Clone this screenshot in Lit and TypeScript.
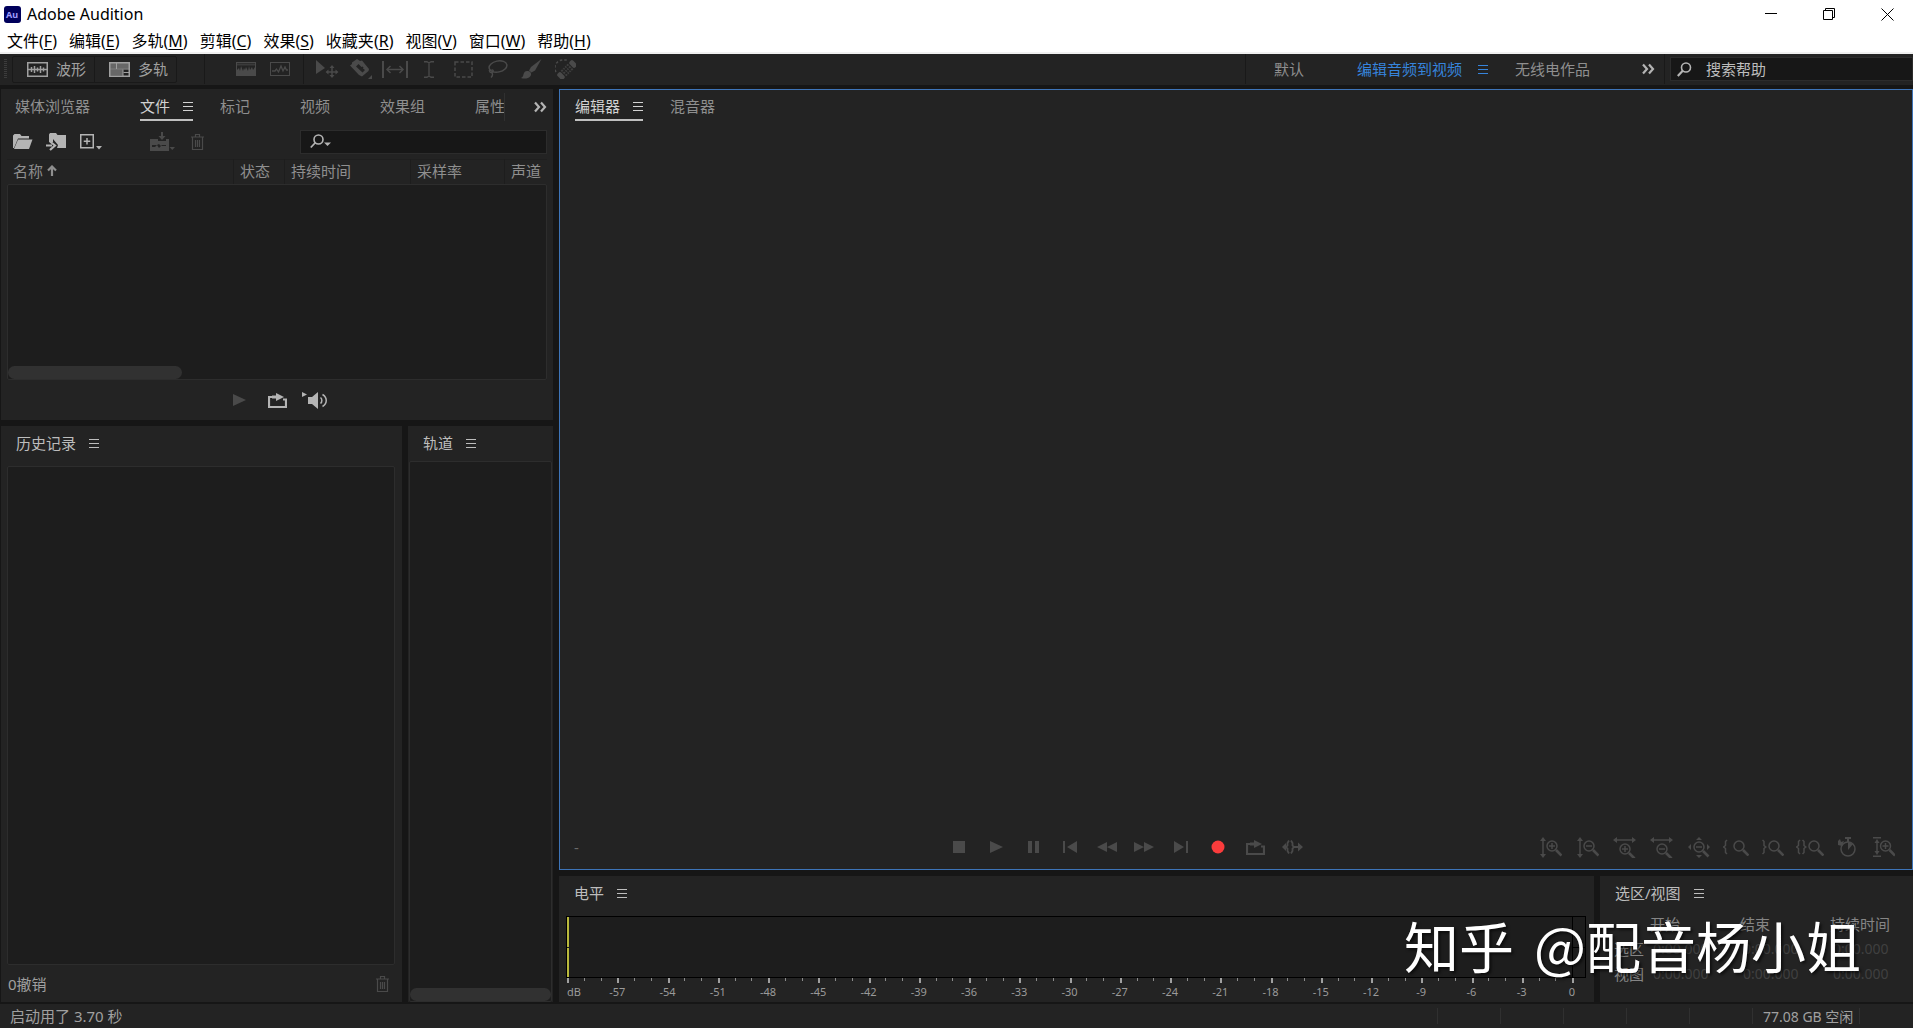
import { LitElement, html, css, svg, nothing } from "lit";
import type { SVGTemplateResult, TemplateResult } from "lit";
import { customElement } from "lit/decorators.js";

interface Icon {
  w: number;
  h: number;
  body: SVGTemplateResult;
}

const lens = (cx: number, cy: number, sign: SVGTemplateResult | typeof nothing = nothing) => svg`
  <circle cx=${cx} cy=${cy} r="5" fill="none" stroke="currentColor" stroke-width="1.5"/>
  <path d=${`M${cx + 4} ${cy + 4}l5.5 5.5`} stroke="currentColor" stroke-width="2.6"/>
  ${sign}`;
const plus = (cx: number, cy: number) =>
  svg`<path d=${`M${cx - 3} ${cy}h6M${cx} ${cy - 3}v6`} stroke="currentColor" stroke-width="1.5"/>`;
const minus = (cx: number, cy: number) =>
  svg`<path d=${`M${cx - 3} ${cy}h6`} stroke="currentColor" stroke-width="1.5"/>`;
const vArrow = svg`<path d="M3 3v15" stroke="currentColor" stroke-width="1.5"/><path d="M3 0l3 4H0zM3 21l3-4H0z" fill="currentColor"/>`;
const hArrow = svg`<path d="M3 3h17" stroke="currentColor" stroke-width="1.5"/><path d="M0 3l4-3v6zM23 3l-4-3v6z" fill="currentColor"/>`;

const icons: Record<string, Icon> = {
  menu: { w: 10, h: 11, body: svg`<path d="M0 1.500h10M0 5.500h10M0 9.500h10" stroke="currentColor" stroke-width="1.200"/>` },
  more: { w: 14, h: 12, body: svg`<path d="M2 1.500l4 4.500-4 4.500M8 1.500l4 4.500-4 4.500" fill="none" stroke="currentColor" stroke-width="2.200"/>` },
  minimize: { w: 12, h: 12, body: svg`<path d="M0 5.500h12" stroke="currentColor"/>` },
  restore: { w: 12, h: 12, body: svg`<path d="M.500 2.500h9v9h-9zM2.500 2.500v-2h9v9h-2" fill="none" stroke="currentColor"/>` },
  close: { w: 13, h: 13, body: svg`<path d="M.500.500l12 12M12.500.500l-12 12" stroke="currentColor"/>` },
  wave: { w: 21, h: 15, body: svg`<rect x=".75" y=".75" width="19.500" height="13.500" fill="none" stroke="currentColor" stroke-width="1.500"/><path d="M1 7.500h19M4.500 5v5M7.500 4v7M10.500 5.500v4M13.500 4v7M16.500 5.500v4" stroke="currentColor" stroke-width="1.500"/>` },
  multi: { w: 21, h: 15, body: svg`<rect x=".75" y=".75" width="19.500" height="13.500" fill="none" stroke="currentColor" stroke-width="1.500"/><path d="M1 1h19v5.500H1z" fill="currentColor" opacity=".55"/><path d="M1 7.500h13v6H1z" fill="currentColor" opacity=".55"/><path d="M1 7h19M7.500 1v6M14 7.500V14M14.500 10.500H20" stroke="currentColor"/>` },
  spectrum: { w: 20, h: 14, body: svg`<rect x=".5" y=".5" width="19" height="13" fill="none" stroke="currentColor"/><path d="M1 13V8l2-2 1 3 1-5 2 5 1-3 1 2 1-3 2 4 1-5 1 4 2-3 1 3 2-3v8z" fill="currentColor"/><path d="M1 2.500h18" stroke="currentColor" stroke-width="2" opacity=".6"/>` },
  pitch: { w: 20, h: 14, body: svg`<rect x=".5" y=".5" width="19" height="13" fill="none" stroke="currentColor"/><path d="M2 9h3l1.500-2 2 3 2.500-6 2 5 2-4 1.500 3H18" fill="none" stroke="currentColor" stroke-width="1.300"/>` },
  move: { w: 24, h: 18, body: svg`<path d="M1 0l9 8-9 6z" fill="currentColor"/><path d="M17 7v10M12 12h10" stroke="currentColor" stroke-width="1.500"/><path d="M17 5l2.500 3h-5zM17 18l2.500-3h-5zM10.500 12l3-2.500v5zM23.500 12l-3-2.500v5z" fill="currentColor"/>` },
  razor: { w: 22, h: 20, body: svg`<path fill-rule="evenodd" d="M7 0l3 2 2-.500L19 10l-.500 2L12 17.500 9 16 0 6.500l2-1.500 0-1.500zM8.500 5L6 7.500l6.500 6 2.500-2.500-2-1.500.500-1-1-1-1 .500z" fill="currentColor"/><path d="M22 16v4h-4z" fill="currentColor"/>` },
  slip: { w: 26, h: 17, body: svg`<path d="M1 0v17M25 0v17" stroke="currentColor" stroke-width="2"/><path d="M5 8.500h16" stroke="currentColor" stroke-width="1.500"/><path d="M8.500 5L5 8.500 8.500 12M17.500 5L21 8.500 17.500 12" fill="none" stroke="currentColor" stroke-width="1.500"/>` },
  ibeam: { w: 10, h: 17, body: svg`<path d="M0 .75h3L5 2l2-1.250h3M0 16.250h3L5 15l2 1.250h3M5 2v13" fill="none" stroke="currentColor" stroke-width="1.300"/>` },
  marquee: { w: 19, h: 17, body: svg`<rect x="1" y="1" width="17" height="15" fill="none" stroke="currentColor" stroke-width="1.500" stroke-dasharray="3.500 2"/>` },
  lasso: { w: 21, h: 18, body: svg`<ellipse cx="11" cy="6.500" rx="9" ry="5.500" transform="rotate(-12 11 6.500)" fill="none" stroke="currentColor" stroke-width="1.500"/><path d="M3 9c-1.500 2 0 4 2 3.500s1.500-3-.500-2.500M4.500 12.500c1.500 1 1.500 3-.500 5" fill="none" stroke="currentColor" stroke-width="1.400"/>` },
  brush: { w: 21, h: 20, body: svg`<path d="M20.500 0L14 11.500l-3.500 2-2.500-2L10 8z" fill="currentColor"/><path d="M7 12c3 .5 4 3 2.500 5C7.500 20 3 20 0 19c2.500-1 2-3 3-5s2.500-2 4-2z" fill="currentColor"/>` },
  heal: { w: 21, h: 20, body: svg`<g transform="rotate(-45 12 11)"><rect x="1" y="7" width="5" height="8" rx="2" fill="currentColor"/><rect x="18" y="7" width="5" height="8" rx="2" fill="currentColor"/><path d="M7 7h10v8H7z" fill="currentColor" opacity=".75"/><path d="M9.500 7v8M12 7v8M14.500 7v8M7 9.500h10M7 12.500h10" stroke="#232323"/></g><path d="M1 13A8 8 0 0 1 9 1h4" fill="none" stroke="currentColor" stroke-width="1.500" stroke-dasharray="2.500 2"/>` },
  search: { w: 15, h: 15, body: svg`<circle cx="9" cy="5.500" r="4.500" fill="none" stroke="currentColor" stroke-width="1.600"/><path d="M6 8.500L.800 14" stroke="currentColor" stroke-width="2.200"/>` },
  searchDrop: { w: 21, h: 15, body: svg`<circle cx="8.500" cy="5.500" r="4.500" fill="none" stroke="currentColor" stroke-width="1.600"/><path d="M5.500 8.500L.800 13.500" stroke="currentColor" stroke-width="1.800"/><path d="M14 8.500h7L17.500 12z" fill="currentColor"/>` },
  folder: { w: 20, h: 15, body: svg`<path d="M0 14V1.500L1.500 0H7l1.500 2H16v2.500H5L1 14z" fill="currentColor"/><path d="M5 5.500h14.500L16 15H1z" fill="currentColor"/>` },
  folderIn: { w: 21, h: 18, body: svg`<path d="M3 8V1.500L4 0h6l1.500 2H20v13H11l1-3-5-6v3H3z" fill="currentColor"/><path d="M0 12.500h6M4 8.500l5 4-5 4.500" fill="none" stroke="currentColor" stroke-width="2.200"/>` },
  newFile: { w: 22, h: 16, body: svg`<rect x=".75" y=".75" width="12.500" height="13" fill="none" stroke="currentColor" stroke-width="1.500"/><path d="M7 4v6.500M3.750 7.250h6.500" stroke="currentColor" stroke-width="1.500"/><path d="M16 12h6l-3 3.500z" fill="currentColor"/>` },
  insert: { w: 25, h: 19, body: svg`<path fill-rule="evenodd" d="M0 7h8v2h8V7h3v12H0zM2 13v2h3l2-2 2 3 2-2h5v-1h-4l-1 1-2-2-2 1z" fill="currentColor"/><path d="M12 0v5" stroke="currentColor" stroke-width="2"/><path d="M8.500 4h7L12 8z" fill="currentColor"/><path d="M19.500 15H25l-2.750 3z" fill="currentColor"/>` },
  trash: { w: 13, h: 16, body: svg`<path d="M0 3h13M4.500 2.500v-2h4v2M1.500 3.500v12h10v-12M4.500 6v7M6.500 6v7M8.500 6v7" fill="none" stroke="currentColor" stroke-width="1.200"/>` },
  up: { w: 10, h: 11, body: svg`<path d="M5 11V2M1 5.500l4-4 4 4" fill="none" stroke="currentColor" stroke-width="2.200"/>` },
  play: { w: 13, h: 12, body: svg`<path d="M0 0l13 6-13 6z" fill="currentColor"/>` },
  loop: { w: 19, h: 15, body: svg`<path d="M6 4H1v10h17V6.500h-3" fill="none" stroke="currentColor" stroke-width="2.200"/><path d="M4 4h5" stroke="currentColor" stroke-width="3"/><path d="M8 0l8 4-8 4z" fill="currentColor"/>` },
  speaker: { w: 26, h: 17, body: svg`<path d="M0 0l5 2.500L0 5z" fill="currentColor"/><path d="M6 5h4l6-5v17l-6-5H6z" fill="currentColor"/><path d="M18.500 5.500c1.800 1.500 1.800 4.500 0 6M20.500 2.500c5 3 5 9 0 12" fill="none" stroke="currentColor" stroke-width="1.500"/>` },
  stop: { w: 12, h: 12, body: svg`<path d="M0 0h12v12H0z" fill="currentColor"/>` },
  pause: { w: 11, h: 12, body: svg`<path d="M0 0h4v12H0zM7 0h4v12H7z" fill="currentColor"/>` },
  prev: { w: 14, h: 12, body: svg`<path d="M0 0h2v12H0zM14 0v12L4 6z" fill="currentColor"/>` },
  next: { w: 14, h: 12, body: svg`<path d="M12 0h2v12h-2zM0 0v12l10-6z" fill="currentColor"/>` },
  rewind: { w: 20, h: 10, body: svg`<path d="M10 0v10L0 5zM20 0v10L10 5z" fill="currentColor"/>` },
  forward: { w: 20, h: 10, body: svg`<path d="M0 0v10l10-5zM10 0v10l10-5z" fill="currentColor"/>` },
  record: { w: 14, h: 14, body: svg`<circle cx="7" cy="7" r="6.500" fill="currentColor"/>` },
  skip: { w: 21, h: 14, body: svg`<path d="M0 7l4-4v8zM21 7l-5-4.500v9z" fill="currentColor"/><path d="M7 .500L5.500 3v2.500L4 7l1.500 1.500V11L7 13.500M9 .500L10.500 3v2.500L12 7l-1.500 1.500V11L9 13.500M3 7h1M12 7h5" fill="none" stroke="currentColor" stroke-width="1.800"/>` },
  zoomInV: { w: 22, h: 21, body: svg`${vArrow}${lens(12, 9, plus(12, 9))}` },
  zoomOutV: { w: 22, h: 21, body: svg`${vArrow}${lens(12, 9, minus(12, 9))}` },
  zoomInH: { w: 23, h: 21, body: svg`${hArrow}${lens(12, 12, plus(12, 12))}` },
  zoomOutH: { w: 23, h: 21, body: svg`${hArrow}${lens(12, 12, minus(12, 12))}` },
  zoomAll: { w: 22, h: 21, body: svg`${lens(11, 10, minus(11, 10))}<path d="M11 0l3 3H8zM11 21l3-3H8zM0 10l3-3v6zM22 10l-3-3v6z" fill="currentColor"/>` },
  zoomIn: { w: 26, h: 17, body: svg`<path d="M4 1L2.500 2.500v4L.700 8l1.800 1.500v4L4 15" fill="none" stroke="currentColor" stroke-width="1.500"/>${lens(16, 7)}` },
  zoomOut: { w: 22, h: 17, body: svg`<path d="M.500 1L2 2.500v4L3.800 8 2 9.500v4L.500 15" fill="none" stroke="currentColor" stroke-width="1.500"/>${lens(12, 7)}` },
  zoomSel: { w: 28, h: 17, body: svg`<path d="M4 1L2.500 2.500v4L.700 8l1.800 1.500v4L4 15M6.500 1L8 2.500v4L9.800 8 8 9.500v4L6.500 15" fill="none" stroke="currentColor" stroke-width="1.500"/>${lens(18, 7)}` },
  timer: { w: 18, h: 20, body: svg`<circle cx="10" cy="12" r="7" fill="none" stroke="currentColor" stroke-width="1.500"/><path d="M10 1v4M7 1h6" stroke="currentColor" stroke-width="2"/><path d="M10 5l5 2-5 6z" fill="currentColor"/><path d="M0 8V4l2-2 1 3 3-1-2 5z" fill="currentColor"/>` },
  zoomFit: { w: 22, h: 20, body: svg`<path d="M0 .75h8M0 19.250h8" stroke="currentColor" stroke-width="1.500"/><path d="M4 5v10" stroke="currentColor" stroke-width="1.500"/><path d="M4 2l2.500 4h-5zM4 18l2.500-4h-5z" fill="currentColor"/>${lens(12.5, 9, plus(12.5, 9))}` },
};

const icon = (name: string): TemplateResult => {
  const { w, h, body } = icons[name];
  return html`<svg width=${w} height=${h} viewBox="0 0 ${w} ${h}" aria-hidden="true">${body}</svg>`;
};

const iconButton = (name: string, label: string, tone = "") =>
  html`<button class="icon ${tone}" aria-label=${label}>${icon(name)}</button>`;

const base = css`
  * { box-sizing: border-box; }
  button {
    font: inherit;
    color: inherit;
    background: none;
    border: 0;
    padding: 0;
    margin: 0;
    white-space: nowrap;
  }
  svg { display: block; flex: none; }
  .icon { display: flex; align-items: center; justify-content: center; flex: none; color: #4a4a4a; }
  .icon.bright { color: #b4b4b4; }
  .icon.record { color: #fa3c3c; }
`;

@customElement("tab-strip")
export class TabStrip extends LitElement {
  static properties = { tabs: { attribute: false }, active: {}, variant: {} };
  declare tabs: string[];
  declare active: string;
  declare variant: string;

  static styles = [
    base,
    css`
      :host { display: block; min-width: 0; overflow: hidden; }
      .strip { display: flex; gap: 27px; align-items: flex-start; }
      .tab { display: flex; align-items: center; gap: 13px; height: 28px; border-bottom: 2px solid transparent; color: #8f8f8f; }
      .tab .mark { visibility: hidden; }
      .tab.active { color: #d2d2d2; border-color: #c0c0c0; }
      .tab.active .mark { visibility: visible; }
      .tab.title { border-color: transparent; color: #bdbdbd; }
      .workspace .tab { gap: 16px; height: 30px; border: 0; }
      .workspace .tab.active { color: #3684dc; }
    `,
  ];

  render() {
    return html`<div class="strip ${this.variant ?? ""}" role="tablist">
      ${this.tabs.map(
        (t) => html`<button role="tab" aria-selected=${t === this.active}
          class="tab ${t === this.active ? "active" : ""} ${this.variant === "single" ? "title" : ""}">
          <span>${t}</span><span class="mark">${icon("menu")}</span>
        </button>`,
      )}
    </div>`;
  }
}

@customElement("level-meter")
export class LevelMeter extends LitElement {
  static styles = [
    base,
    css`
      :host { display: block; }
      .meter { height: 62px; border: 1px solid #000; background: #1d1d1d; display: flex; justify-content: space-between; }
      .bars { display: grid; gap: 1px; width: 2px; }
      .bar { background: #b9b93c; }
      .clip { width: 13px; border-left: 1px solid #000; display: grid; grid-template-rows: 1fr 1fr; }
      .clip span + span { border-top: 1px solid #000; }
      .ticks, .labels { display: flex; justify-content: space-between; margin: 0 14px 0 1px; }
      .tick { width: 0; }
      .tick::before { content: ""; display: block; width: 1px; height: 3px; background: #8c8c8c; }
      .tick.major::before { width: 2px; height: 5px; background: #a0a0a0; }
      .ticks { height: 5px; }
      .labels { font-size: 11px; line-height: 18px; color: #9a9a9a; }
      .label { width: 0; display: flex; justify-content: center; white-space: nowrap; }
      .label:first-child { justify-content: flex-start; }
    `,
  ];

  render() {
    const ticks = Array.from({ length: 61 }, (_, i) => i);
    const labels = Array.from({ length: 21 }, (_, i) => (i === 0 ? "dB" : String(i * 3 - 60)));
    return html`
      <div class="meter">
        <div class="bars"><span class="bar"></span><span class="bar"></span></div>
        <div class="clip"><span></span><span></span></div>
      </div>
      <div class="ticks">${ticks.map((i) => html`<span class="tick ${i % 3 ? "" : "major"}"></span>`)}</div>
      <div class="labels">${labels.map((l) => html`<span class="label"><span>${l}</span></span>`)}</div>
    `;
  }
}

@customElement("app-root")
export class AppRoot extends LitElement {
  static styles = [
    base,
    css`
      :host {
        display: flex;
        flex-direction: column;
        position: relative;
        min-height: 100vh;
        overflow: hidden;
        background: #161616;
        color: #a0a0a0;
        font: 15px/20px "Noto Sans", "Noto Sans CJK SC", sans-serif;
      }

      .titlebar { display: flex; align-items: center; height: 30px; padding: 0 19px 2px 4px; background: #fff; color: #000; font-size: 16px; }
      .logo { margin-right: 6px; }
      .logo text { font: bold 9px "Noto Sans", sans-serif; fill: #9e9cff; }
      .title { flex: 1; }
      .window { display: flex; gap: 46px; }
      .menubar { display: flex; align-items: center; gap: 12px; height: 24px; padding: 0 7px; background: #fff; color: #000; font-size: 16px; border-bottom: 2px solid #f0f0f0; }
      .menubar u { text-underline-offset: 2px; }

      .toolbar { display: flex; align-items: center; height: 31px; padding-bottom: 1px; background: #232323; }
      .grip { width: 3px; height: 20px; margin: 0 5px 0 4px; background: repeating-linear-gradient(#3c3c3c 0 1px, #232323 1px 2px); }
      .modes { display: flex; border: 1px solid #191919; border-radius: 2px; }
      .mode { display: flex; align-items: center; gap: 8px; height: 25px; padding: 0 8px 0 14px; color: #a0a0a0; }
      .mode + .mode { border-left: 1px solid #191919; }
      .tools { display: flex; }
      .tools .icon { width: 34px; height: 24px; }
      .rule { width: 1px; align-self: stretch; background: #191919; }
      .rule.first { margin: 0 24px 0 27px; }
      .rule.second { margin: 0 6px; }
      .push { flex: 1; }
      .workspaces { display: flex; align-items: center; padding: 0 9px 0 28px; gap: 25px; }
      .search { display: flex; align-items: center; background: #171717; border: 1px solid #2c2c2c; }
      .search input { flex: 1; min-width: 0; border: 0; outline: 0; padding: 0; background: none; color: #bdbdbd; font: inherit; }
      .search input::placeholder { color: #bdbdbd; opacity: 1; }
      .help { width: 243px; height: 24px; margin-left: 5px; padding-left: 6px; gap: 14px; color: #b4b4b4; }

      .workspace { flex: 1; display: grid; grid-template-columns: 552px minmax(0, 1fr); gap: 6px; padding: 4px 0 2px 1px; }
      .left, .right { display: flex; flex-direction: column; gap: 6px; min-width: 0; }
      .panel { background: #232323; display: flex; flex-direction: column; min-width: 0; }
      .head { display: flex; align-items: center; padding: 4px 5px 0 15px; }
      .box { background: #1d1d1d; border: 1px solid #2d2d2d; border-radius: 2px; }
      .thumb { background: #313131; height: 13px; border-radius: 7px; }

      .files { height: 331px; padding: 0 6px; }
      .files .head { padding: 4px 0 0 8px; justify-content: space-between; }
      .files tab-strip { width: 490px; border-right: 1px solid #303030; }
      .filebar { display: flex; align-items: center; height: 38px; padding-top: 3px; }
      .filebar .icon { margin-left: 6px; margin-right: 7px; }
      .filebar .gap { width: 35px; }
      .filebar .gap.small { width: 3px; }
      .filter { width: 247px; height: 24px; margin-left: auto; padding-left: 9px; color: #b4b4b4; }
      .list { table-layout: fixed; width: 100%; border-collapse: separate; border-spacing: 0; }
      .list th { height: 25px; padding: 0 6px 3px; font-weight: 400; text-align: left; white-space: nowrap; color: #8f8f8f; border-top: 1px solid #1f1f1f; }
      .list th + th { border-left: 1px solid #1d1d1d; }
      .list td { height: 196px; padding: 0; vertical-align: bottom; }
      .sort { display: flex; align-items: center; gap: 4px; }
      .name { width: 226px; }
      .state { width: 51px; }
      .length { width: 126px; }
      .rate { width: 94px; }
      .preview { display: flex; justify-content: center; padding-top: 11px; }
      .preview .icon { width: 38px; height: 18px; }

      .lower { flex: 1; display: flex; gap: 6px; }
      .history { flex: 1; }
      .history .box { flex: 1; margin: 8px 7px 0 6px; }
      .foot { display: flex; align-items: center; justify-content: space-between; height: 37px; padding: 0 13px 0 7px; }
      .tracks { width: 145px; }
      .tracks .box { flex: 1; margin: 3px 1px 0; display: flex; flex-direction: column; justify-content: flex-end; }

      .editor { flex: 1; border: 1px solid #3d74b8; }
      .editor .head { padding: 3px 5px 0 15px; }
      .transport { display: flex; align-items: center; margin-top: auto; padding: 0 10px 7px 14px; }
      .transport .icon { width: 37px; height: 30px; }
      .dash { color: #6a6a6a; }
      .group { display: flex; }
      .wide { flex: 36; }
      .narrow { flex: 22; }

      .bottom { display: flex; gap: 6px; height: 126px; }
      .levels { flex: 1; }
      .levels level-meter { margin: 8px 8px 0 7px; }
      .range { width: 313px; }
      .range table { border-collapse: collapse; margin: 3px 0 0 14px; width: 299px; table-layout: fixed; }
      .range th, .range td { height: 25px; padding: 0; font-weight: 400; text-align: left; white-space: nowrap; color: #858585; }
      .range td { color: #404040; padding-left: 3px; font-size: 14px; }
      .range .rowhead { width: 36px; }
      .range .point { width: 90px; }

      .status { display: flex; align-items: center; height: 24px; padding-left: 10px; background: #232323; }
      .slots { display: flex; margin-left: auto; height: 16px; }
      .slot { width: 63px; border-left: 1px solid #303030; }
      .space { width: 107px; padding-left: 10px; border-left: 1px solid #303030; font-size: 14px; line-height: 18px; white-space: nowrap; }
      .end { width: 54px; border-left: 1px solid #303030; }

      .credit { position: absolute; right: 52px; bottom: 44px; display: flex; gap: 20px; color: #fff; font: 55px/80px "Noto Sans CJK SC", sans-serif; text-shadow: 2px 2px 3px rgba(0, 0, 0, 0.6); white-space: nowrap; pointer-events: none; }
    `,
  ];

  private menus: [string, string][] = [
    ["文件", "F"], ["编辑", "E"], ["多轨", "M"], ["剪辑", "C"], ["效果", "S"],
    ["收藏夹", "R"], ["视图", "V"], ["窗口", "W"], ["帮助", "H"],
  ];

  private tools: [string, string][] = [
    ["move", "移动工具"], ["razor", "切断工具"], ["slip", "滑动工具"], ["ibeam", "时间选择工具"],
    ["marquee", "框选工具"], ["lasso", "套索选择工具"], ["brush", "画笔选择工具"], ["heal", "污点修复工具"],
  ];

  private transport: [string, string][] = [
    ["stop", "停止"], ["play", "播放"], ["pause", "暂停"], ["prev", "上一个"], ["rewind", "快退"],
    ["forward", "快进"], ["next", "下一个"], ["record", "录制"], ["loop", "循环播放"], ["skip", "跳过所选项目"],
  ];

  private zooms: [string, string][] = [
    ["zoomInV", "放大振幅"], ["zoomOutV", "缩小振幅"], ["zoomInH", "放大时间"], ["zoomOutH", "缩小时间"],
    ["zoomAll", "全部缩小"], ["zoomIn", "放大入点"], ["zoomOut", "放大出点"], ["zoomSel", "缩放至选区"],
    ["timer", "计时录制"], ["zoomFit", "放大音轨"],
  ];

  render() {
    return html`
      <header class="titlebar">
        <svg class="logo" width="17" height="17" viewBox="0 0 17 17" aria-hidden="true">
          <rect width="17" height="17" rx="3" fill="#00005b" /><text x="2" y="12">Au</text>
        </svg>
        <span class="title">Adobe Audition</span>
        <div class="window">
          <button aria-label="最小化">${icon("minimize")}</button>
          <button aria-label="还原">${icon("restore")}</button>
          <button aria-label="关闭">${icon("close")}</button>
        </div>
      </header>
      <nav class="menubar">
        ${this.menus.map(([name, key]) => html`<button>${name}(<u>${key}</u>)</button>`)}
      </nav>

      <div class="toolbar">
        <span class="grip"></span>
        <div class="modes">
          <button class="mode">${icon("wave")}波形</button>
          <button class="mode">${icon("multi")}多轨</button>
        </div>
        <span class="rule first"></span>
        <div class="tools">
          ${iconButton("spectrum", "频谱频率显示")}${iconButton("pitch", "频谱音调显示")}
        </div>
        <span class="rule second"></span>
        <div class="tools">${this.tools.map(([n, l]) => iconButton(n, l))}</div>
        <span class="push"></span>
        <span class="rule"></span>
        <div class="workspaces">
          <tab-strip variant="workspace" .tabs=${["默认", "编辑音频到视频", "无线电作品"]} active="编辑音频到视频"></tab-strip>
          ${iconButton("more", "更多工作区", "bright")}
        </div>
        <span class="rule"></span>
        <label class="search help">${icon("search")}<input type="text" aria-label="搜索帮助" placeholder="搜索帮助" /></label>
      </div>

      <main class="workspace">
        <div class="left">
          <section class="panel files">
            <div class="head">
              <tab-strip .tabs=${["媒体浏览器", "文件", "标记", "视频", "效果组", "属性"]} active="文件"></tab-strip>
              ${iconButton("more", "更多面板", "bright")}
            </div>
            <div class="filebar">
              ${iconButton("folder", "打开文件", "bright")}${iconButton("folderIn", "导入文件", "bright")}
              ${iconButton("newFile", "新建文件", "bright")}
              <span class="gap"></span>
              ${iconButton("insert", "插入到多轨")}<span class="gap small"></span>${iconButton("trash", "删除")}
              <label class="search filter">${icon("searchDrop")}<input type="text" aria-label="筛选文件" /></label>
            </div>
            <table class="list">
              <thead>
                <tr>
                  <th class="name"><span class="sort">名称${icon("up")}</span></th>
                  <th class="state">状态</th>
                  <th class="length">持续时间</th>
                  <th class="rate">采样率</th>
                  <th>声道</th>
                </tr>
              </thead>
              <tbody>
                <tr><td class="box" colspan="5"><div class="thumb" style="width:32.4%"></div></td></tr>
              </tbody>
            </table>
            <div class="preview">
              ${iconButton("play", "播放")}${iconButton("loop", "循环播放", "bright")}${iconButton("speaker", "自动播放", "bright")}
            </div>
          </section>
          <div class="lower">
            <section class="panel history">
              <div class="head"><tab-strip variant="single" .tabs=${["历史记录"]} active="历史记录"></tab-strip></div>
              <div class="box"></div>
              <div class="foot"><span>0撤销</span>${iconButton("trash", "清除历史记录")}</div>
            </section>
            <section class="panel tracks">
              <div class="head"><tab-strip variant="single" .tabs=${["轨道"]} active="轨道"></tab-strip></div>
              <div class="box"><div class="thumb"></div></div>
            </section>
          </div>
        </div>

        <div class="right">
          <section class="panel editor">
            <div class="head"><tab-strip .tabs=${["编辑器", "混音器"]} active="编辑器"></tab-strip></div>
            <div class="transport">
              <span class="dash">-</span>
              <span class="wide"></span>
              <div class="group">${this.transport.map(([n, l]) => iconButton(n, l, n === "record" ? "record" : ""))}</div>
              <span class="narrow"></span>
              <div class="group">${this.zooms.map(([n, l]) => iconButton(n, l))}</div>
            </div>
          </section>
          <div class="bottom">
            <section class="panel levels">
              <div class="head"><tab-strip variant="single" .tabs=${["电平"]} active="电平"></tab-strip></div>
              <level-meter></level-meter>
            </section>
            <section class="panel range">
              <div class="head"><tab-strip variant="single" .tabs=${["选区/视图"]} active="选区/视图"></tab-strip></div>
              <table>
                <thead>
                  <tr><th class="rowhead"></th><th class="point">开始</th><th class="point">结束</th><th>持续时间</th></tr>
                </thead>
                <tbody>
                  ${["选区", "视图"].map(
                    (name) => html`<tr><th>${name}</th><td>0:00.000</td><td>0:00.000</td><td>0:00.000</td></tr>`,
                  )}
                </tbody>
              </table>
            </section>
          </div>
        </div>
      </main>

      <footer class="status">
        <span>启动用了 3.70 秒</span>
        <div class="slots">
          ${[1, 2, 3, 4, 5].map(() => html`<span class="slot"></span>`)}
          <span class="space">77.08 GB 空闲</span>
          <span class="end"></span>
        </div>
      </footer>
      <div class="credit"><span>知乎</span><span>@配音杨小姐</span></div>
    `;
  }
}
